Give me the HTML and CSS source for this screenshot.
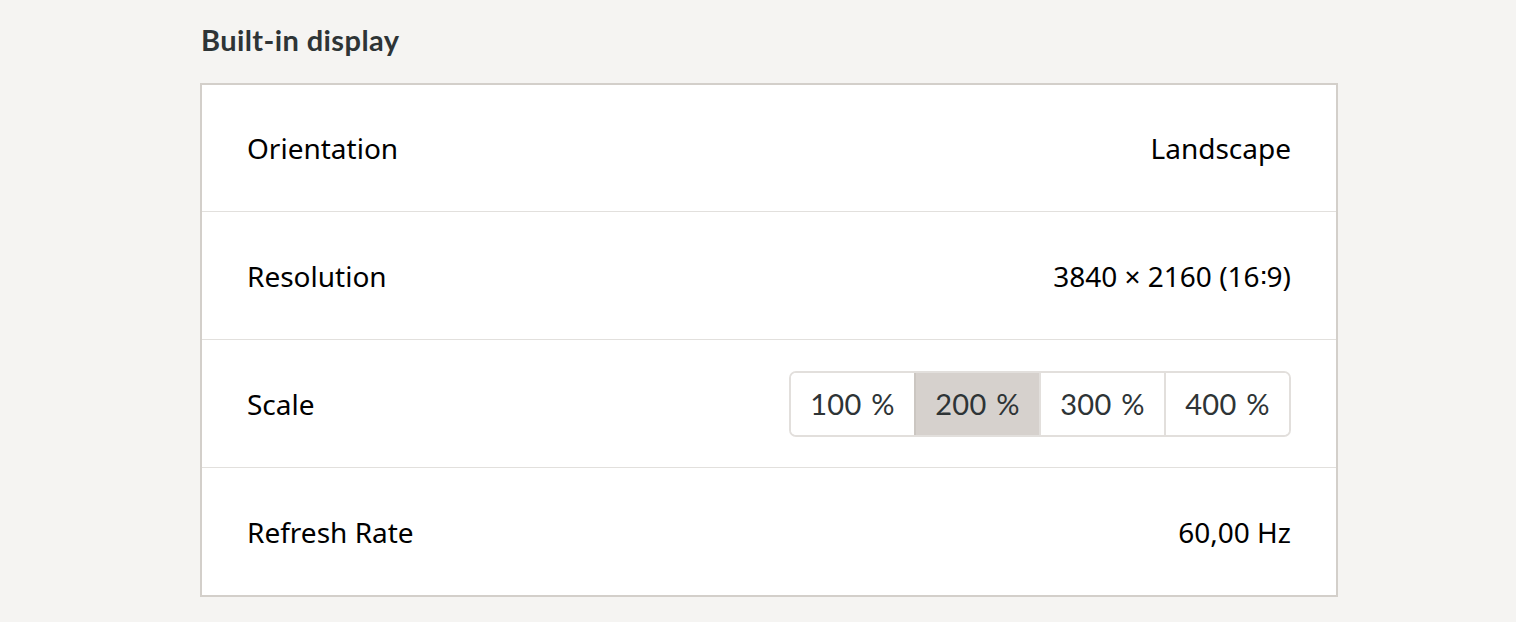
FILE: index.html
```html
<!DOCTYPE html>
<html>
<head>
<meta charset="utf-8">
<link rel="stylesheet" href="styles.css">
</head>
<body>
<main class="page">
  <h2 class="heading">Built-in display</h2>
  <section class="card">
    <div class="row">
      <span class="label">Orientation</span>
      <span class="value">Landscape</span>
    </div>
    <div class="row">
      <span class="label">Resolution</span>
      <span class="value">3840 × 2160 (16∶9)</span>
    </div>
    <div class="row">
      <span class="label">Scale</span>
      <div class="seg">
        <button class="seg-btn">100 %</button>
        <button class="seg-btn active">200 %</button>
        <button class="seg-btn">300 %</button>
        <button class="seg-btn">400 %</button>
      </div>
    </div>
    <div class="row">
      <span class="label">Refresh Rate</span>
      <span class="value">60,00 Hz</span>
    </div>
  </section>
</main>
</body>
</html>
```
FILE: styles.css
```css
html, body {
  margin: 0;
  padding: 0;
  background: #f5f4f2;
}
.page {
  width: 1138px;
  margin-left: 200px;
  padding-top: 18px;
  box-sizing: border-box;
}
.heading {
  margin: 0 0 21px 1px;
  font-family: Lato, "Noto Sans", sans-serif;
  font-weight: 700;
  font-size: 29px;
  letter-spacing: 0.4px;
  line-height: 44px;
  color: #2e3436;
}
.card {
  background: #ffffff;
  border: 2px solid #d3cfca;
}
.row {
  height: 128px;
  display: flex;
  align-items: center;
  justify-content: space-between;
  padding: 0 45px;
  box-sizing: border-box;
  border-top: 1px solid #e2e0dd;
  font-family: "Noto Sans", sans-serif;
  font-size: 28px;
  color: #000000;
}
.row:first-child {
  border-top: none;
  height: 126px;
}
.label, .value {
  line-height: 1;
}
.seg {
  display: flex;
  border: 2px solid #e2dfdc;
  border-radius: 7px;
  overflow: hidden;
}
.seg-btn {
  width: 125px;
  height: 62px;
  border: none;
  border-left: 2px solid #e2dfdc;
  background: #ffffff;
  font-family: Lato, sans-serif;
  font-size: 29px;
  word-spacing: 2px;
  letter-spacing: 0.3px;
  color: #2e3436;
  padding: 0;
}
.seg-btn:first-child {
  border-left: none;
  width: 123px;
}
.seg-btn.active {
  background: #d6d1cd;
  border-left-color: #cbc6c1;
}
```
